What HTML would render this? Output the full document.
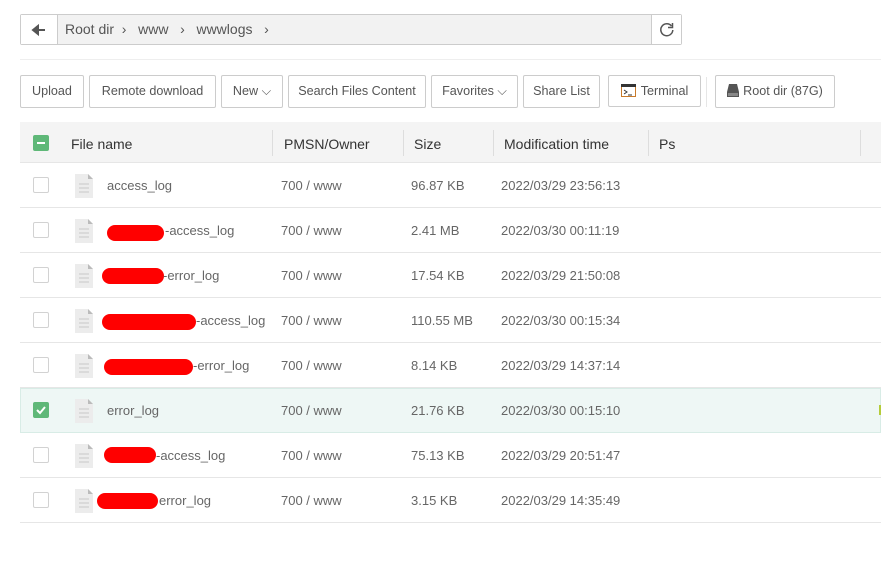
<!DOCTYPE html>
<html><head><style>
*{box-sizing:border-box;margin:0;padding:0}
body{width:881px;height:573px;background:#fff;font-family:"Liberation Sans",sans-serif;color:#555;font-size:13px;position:relative;overflow:hidden}
.abs{position:absolute}
.crumb{left:20px;top:14px;width:662px;height:31px;border:1px solid #ccc;border-radius:2px;background:#f2f2f2}
.back{left:0;top:0;width:37px;height:29px;background:#fff;border-right:1px solid #ccc}
.ref{right:0;top:0;width:30px;height:29px;background:#fff;border-left:1px solid #ccc}
.btn{top:75px;height:33px;border:1px solid #ccc;border-radius:2px;background:#fff;font-size:12.6px;color:#555;line-height:31px;text-align:center;white-space:nowrap}
.hdr{left:20px;top:122px;width:861px;height:41px;background:#f4f4f4;border-bottom:1px solid #e6e6e6}
.row{left:20px;width:861px;height:45px;border-bottom:1px solid #e6e6e6}
.cb{position:absolute;left:13px;width:16px;height:16px;border:1px solid #d2d2d2;border-radius:2px;background:#fff}
.t{position:absolute;font-size:13px;color:#666;white-space:nowrap}
.sep{position:absolute;top:8px;width:1px;height:26px;background:#ddd}
.red{position:absolute;height:16px;background:#f00;border-radius:8px}
</style></head><body>
<div class="abs crumb">
 <div class="abs back"><svg width="37" height="29"><path d="M13 15h11M12 15l5-4v8z" stroke="#555" stroke-width="2" fill="#555"/></svg></div>
 <div class="t" style="left:44px;top:6px;font-size:14px;color:#555">Root dir&nbsp;&nbsp;›&nbsp;&nbsp;&nbsp;www&nbsp;&nbsp;&nbsp;›&nbsp;&nbsp;&nbsp;wwwlogs&nbsp;&nbsp;&nbsp;›</div>
 <div class="abs ref"><svg width="30" height="29"><path d="M19.5 11a6 6 0 1 0 1.3 4" stroke="#555" stroke-width="1.5" fill="none"/><path d="M20.5 8v4.5h-4.5" stroke="#555" stroke-width="1.5" fill="none"/></svg></div>
</div>
<div class="abs" style="left:20px;top:59px;width:861px;height:1px;background:#eee"></div>
<div class="abs btn" style="left:20px;width:64px">Upload</div>
<div class="abs btn" style="left:89px;width:127px">Remote download</div>
<div class="abs btn" style="left:221px;width:62px">New ⌵</div>
<div class="abs btn" style="left:288px;width:138px">Search Files Content</div>
<div class="abs btn" style="left:431px;width:87px">Favorites ⌵</div>
<div class="abs btn" style="left:523px;width:77px">Share List</div>
<div class="abs btn" style="left:608px;width:93px;height:32px"><svg width="15" height="13" style="vertical-align:-2px;margin-right:5px"><rect x=".5" y=".5" width="14" height="12" fill="#fff" stroke="#c87a2a"/><rect x="0" y="0" width="15" height="3" fill="#333"/><path d="M3 6l3 2-3 2M7 11h4" stroke="#333" fill="none"/></svg>Terminal</div>
<div class="abs" style="left:706px;top:77px;width:1px;height:30px;background:#e6e6e6"></div>
<div class="abs btn" style="left:715px;width:120px"><svg width="12" height="13" style="vertical-align:-2px;margin-right:4px"><path d="M2 0h8l2 8v5H0V8z" fill="#555"/><rect x="1" y="9" width="10" height="3" fill="#888"/></svg>Root dir (87G)</div>

<div class="abs hdr">
 <div class="cb" style="top:13px;background:#5fb878;border-color:#5fb878"><div style="position:absolute;left:3px;top:6px;width:8px;height:2px;background:#fff"></div></div>
 <div class="t" style="left:51px;top:14px;font-size:14px;color:#333">File name</div>
 <div class="sep" style="left:252px"></div><div class="t" style="left:264px;top:14px;font-size:14px;color:#333">PMSN/Owner</div>
 <div class="sep" style="left:383px"></div><div class="t" style="left:394px;top:14px;font-size:14px;color:#333">Size</div>
 <div class="sep" style="left:473px"></div><div class="t" style="left:484px;top:14px;font-size:14px;color:#333">Modification time</div>
 <div class="sep" style="left:628px"></div><div class="t" style="left:639px;top:14px;font-size:14px;color:#333">Ps</div>
 <div class="sep" style="left:840px"></div>
</div>

<div class="abs row" style="top:163px"><div class="cb" style="top:14px"></div><svg class="abs" style="left:55px;top:11px" width="18" height="24"><path d="M0 0h13l5 5v19H0z" fill="#ececec"/><path d="M13 0l5 5h-5z" fill="#bbb"/><path d="M4 10h10M4 14h10M4 18h10" stroke="#d0d0d0" stroke-width="1.3"/></svg><div class="t" style="left:87px;top:15px">access_log</div><div class="t" style="left:261px;top:15px">700 / www</div><div class="t" style="left:391px;top:15px">96.87 KB</div><div class="t" style="left:481px;top:15px">2022/03/29 23:56:13</div></div>
<div class="abs row" style="top:208px"><div class="cb" style="top:14px"></div><svg class="abs" style="left:55px;top:11px" width="18" height="24"><path d="M0 0h13l5 5v19H0z" fill="#ececec"/><path d="M13 0l5 5h-5z" fill="#bbb"/><path d="M4 10h10M4 14h10M4 18h10" stroke="#d0d0d0" stroke-width="1.3"/></svg><div class="red" style="left:87px;top:17px;width:57px"></div><div class="t" style="left:145px;top:15px">-access_log</div><div class="t" style="left:261px;top:15px">700 / www</div><div class="t" style="left:391px;top:15px">2.41 MB</div><div class="t" style="left:481px;top:15px">2022/03/30 00:11:19</div></div>
<div class="abs row" style="top:253px"><div class="cb" style="top:14px"></div><svg class="abs" style="left:55px;top:11px" width="18" height="24"><path d="M0 0h13l5 5v19H0z" fill="#ececec"/><path d="M13 0l5 5h-5z" fill="#bbb"/><path d="M4 10h10M4 14h10M4 18h10" stroke="#d0d0d0" stroke-width="1.3"/></svg><div class="red" style="left:82px;top:15px;width:62px"></div><div class="t" style="left:143px;top:15px">-error_log</div><div class="t" style="left:261px;top:15px">700 / www</div><div class="t" style="left:391px;top:15px">17.54 KB</div><div class="t" style="left:481px;top:15px">2022/03/29 21:50:08</div></div>
<div class="abs row" style="top:298px"><div class="cb" style="top:14px"></div><svg class="abs" style="left:55px;top:11px" width="18" height="24"><path d="M0 0h13l5 5v19H0z" fill="#ececec"/><path d="M13 0l5 5h-5z" fill="#bbb"/><path d="M4 10h10M4 14h10M4 18h10" stroke="#d0d0d0" stroke-width="1.3"/></svg><div class="red" style="left:82px;top:16px;width:94px"></div><div class="t" style="left:176px;top:15px">-access_log</div><div class="t" style="left:261px;top:15px">700 / www</div><div class="t" style="left:391px;top:15px">110.55 MB</div><div class="t" style="left:481px;top:15px">2022/03/30 00:15:34</div></div>
<div class="abs row" style="top:343px"><div class="cb" style="top:14px"></div><svg class="abs" style="left:55px;top:11px" width="18" height="24"><path d="M0 0h13l5 5v19H0z" fill="#ececec"/><path d="M13 0l5 5h-5z" fill="#bbb"/><path d="M4 10h10M4 14h10M4 18h10" stroke="#d0d0d0" stroke-width="1.3"/></svg><div class="red" style="left:84px;top:16px;width:89px"></div><div class="t" style="left:173px;top:15px">-error_log</div><div class="t" style="left:261px;top:15px">700 / www</div><div class="t" style="left:391px;top:15px">8.14 KB</div><div class="t" style="left:481px;top:15px">2022/03/29 14:37:14</div></div>
<div class="abs row" style="top:388px;background:#eef7f5;border:1px solid #d8ece6"><div class="cb" style="top:13px;left:12px;background:#5fb878;border-color:#5fb878"><svg width="14" height="14" style="position:absolute;left:0;top:0"><path d="M3 7l3 3 5-6" stroke="#fff" stroke-width="2" fill="none"/></svg></div><svg class="abs" style="left:54px;top:10px" width="18" height="24"><path d="M0 0h13l5 5v19H0z" fill="#ececec"/><path d="M13 0l5 5h-5z" fill="#bbb"/><path d="M4 10h10M4 14h10M4 18h10" stroke="#d0d0d0" stroke-width="1.3"/></svg><div class="t" style="left:86px;top:14px">error_log</div><div class="t" style="left:260px;top:14px">700 / www</div><div class="t" style="left:390px;top:14px">21.76 KB</div><div class="t" style="left:480px;top:14px">2022/03/30 00:15:10</div><div style="position:absolute;left:858px;top:16px;width:2px;height:10px;background:#b5cc3a"></div></div>
<div class="abs row" style="top:433px"><div class="cb" style="top:14px"></div><svg class="abs" style="left:55px;top:11px" width="18" height="24"><path d="M0 0h13l5 5v19H0z" fill="#ececec"/><path d="M13 0l5 5h-5z" fill="#bbb"/><path d="M4 10h10M4 14h10M4 18h10" stroke="#d0d0d0" stroke-width="1.3"/></svg><div class="red" style="left:84px;top:14px;width:52px"></div><div class="t" style="left:136px;top:15px">-access_log</div><div class="t" style="left:261px;top:15px">700 / www</div><div class="t" style="left:391px;top:15px">75.13 KB</div><div class="t" style="left:481px;top:15px">2022/03/29 20:51:47</div></div>
<div class="abs row" style="top:478px"><div class="cb" style="top:14px"></div><svg class="abs" style="left:55px;top:11px" width="18" height="24"><path d="M0 0h13l5 5v19H0z" fill="#ececec"/><path d="M13 0l5 5h-5z" fill="#bbb"/><path d="M4 10h10M4 14h10M4 18h10" stroke="#d0d0d0" stroke-width="1.3"/></svg><div class="red" style="left:77px;top:15px;width:61px"></div><div class="t" style="left:139px;top:15px">error_log</div><div class="t" style="left:261px;top:15px">700 / www</div><div class="t" style="left:391px;top:15px">3.15 KB</div><div class="t" style="left:481px;top:15px">2022/03/29 14:35:49</div></div>
</body></html>
